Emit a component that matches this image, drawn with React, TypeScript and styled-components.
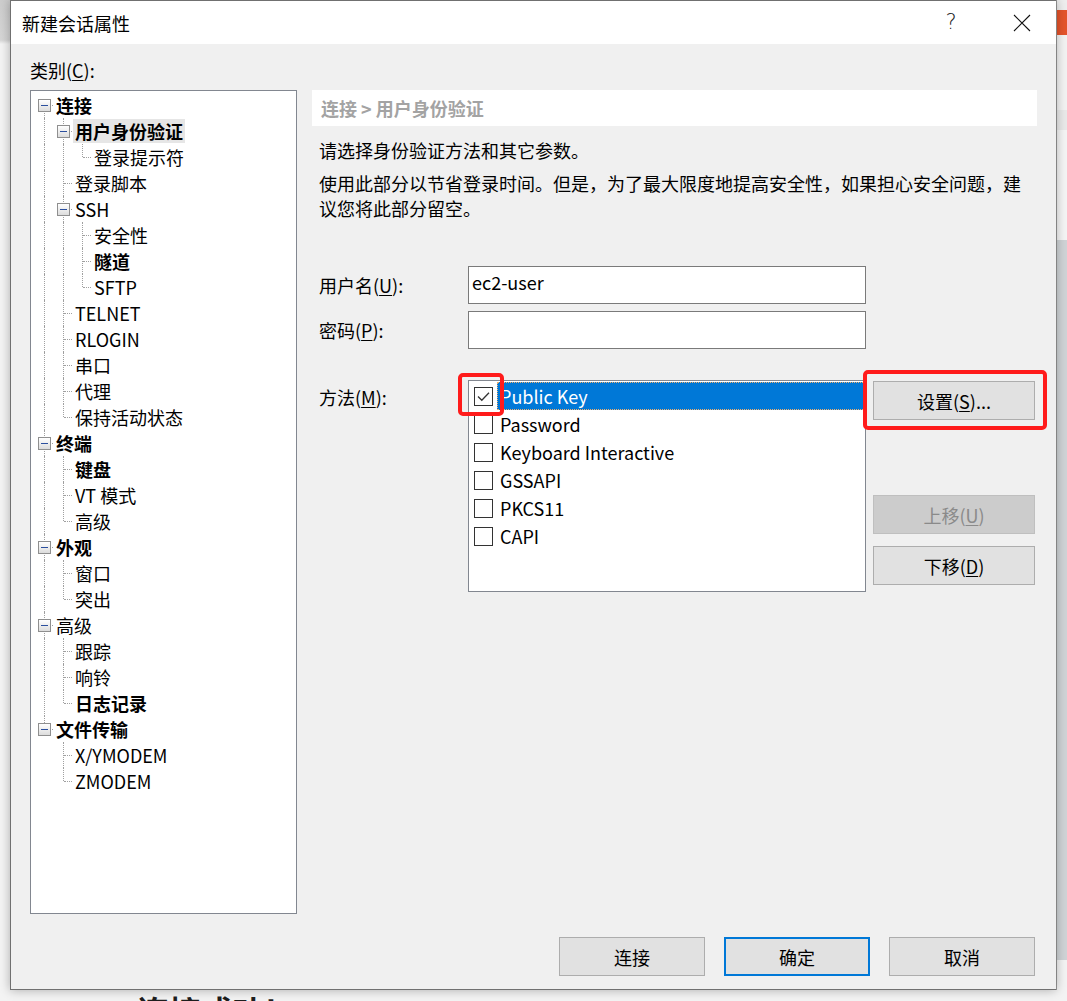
import React from "react";
import styled, { createGlobalStyle } from "styled-components";

type TreeNode = {
    label: string;
    bold?: boolean;
    selected?: boolean;
    children?: TreeNode[];
};

type TreeLine = {
    node: TreeNode;
    lastFlags: boolean[];
    firstRoot: boolean;
};

const categories: TreeNode[] = [
    {
        label: "连接",
        bold: true,
        children: [
            { label: "用户身份验证", bold: true, selected: true, children: [{ label: "登录提示符" }] },
            { label: "登录脚本" },
            {
                label: "SSH",
                children: [{ label: "安全性" }, { label: "隧道", bold: true }, { label: "SFTP" }],
            },
            { label: "TELNET" },
            { label: "RLOGIN" },
            { label: "串口" },
            { label: "代理" },
            { label: "保持活动状态" },
        ],
    },
    {
        label: "终端",
        bold: true,
        children: [{ label: "键盘", bold: true }, { label: "VT 模式" }, { label: "高级" }],
    },
    { label: "外观", bold: true, children: [{ label: "窗口" }, { label: "突出" }] },
    {
        label: "高级",
        children: [{ label: "跟踪" }, { label: "响铃" }, { label: "日志记录", bold: true }],
    },
    { label: "文件传输", bold: true, children: [{ label: "X/YMODEM" }, { label: "ZMODEM" }] },
];

const methods = ["Public Key", "Password", "Keyboard Interactive", "GSSAPI", "PKCS11", "CAPI"];

// flatten the tree, remembering which ancestors are last among their siblings
const flatten = (nodes: TreeNode[], parentFlags: boolean[], out: TreeLine[]) => {
    nodes.forEach((node, i) => {
        const flags = [...parentFlags, i === nodes.length - 1];
        out.push({ node, lastFlags: flags, firstRoot: parentFlags.length === 0 && i === 0 });
        if (node.children) flatten(node.children, flags, out);
    });
    return out;
};

const Mnemonic: React.FC<{ text: string; k: string; tail?: string }> = ({ text, k, tail = ":" }) => (
    <>
        {text}(<u>{k}</u>){tail}
    </>
);

const App: React.FC = () => {
    const lines = flatten(categories, [], []);

    return (
        <Screen>
            <GlobalStyle />
            <Stage>
                <Gutter />
                <Dialog>
                    <TitleBar>
                        <Title>新建会话属性</Title>
                        <TitleButtons>
                            <HelpGlyph>?</HelpGlyph>
                            <CloseIcon width="18" height="18" viewBox="0 0 18 18">
                                <path d="M1 1 L17 17 M17 1 L1 17" stroke="#111" strokeWidth="1.1" fill="none" />
                            </CloseIcon>
                        </TitleButtons>
                    </TitleBar>

                    <Body>
                        <Columns>
                            <CategoryLabel>
                                <Mnemonic text="类别" k="C" />
                            </CategoryLabel>

                            <TreeBox>
                                {lines.map((line, idx) => {
                                    const isLast = line.lastFlags[line.lastFlags.length - 1];
                                    return (
                                        <TreeRow key={idx}>
                                            {line.lastFlags.slice(0, -1).map((last, i) => (
                                                <Guide key={i} $line={!last} />
                                            ))}
                                            <Connector $top={!line.firstRoot} $bottom={!isLast}>
                                                {line.node.children && (
                                                    <Expander>
                                                        <Minus />
                                                    </Expander>
                                                )}
                                            </Connector>
                                            <NodeLabel $bold={line.node.bold} $selected={line.node.selected}>
                                                {line.node.label}
                                            </NodeLabel>
                                        </TreeRow>
                                    );
                                })}
                            </TreeBox>

                            <Panel>
                                <Crumb>连接 &gt; 用户身份验证</Crumb>
                                <Intro>请选择身份验证方法和其它参数。</Intro>
                                <Hint>
                                    使用此部分以节省登录时间。但是，为了最大限度地提高安全性，如果担心安全问题，建议您将此部分留空。
                                </Hint>

                                <FieldRow $first>
                                    <FieldLabel>
                                        <Mnemonic text="用户名" k="U" />
                                    </FieldLabel>
                                    <TextBox>ec2-user</TextBox>
                                </FieldRow>
                                <FieldRow>
                                    <FieldLabel>
                                        <Mnemonic text="密码" k="P" />
                                    </FieldLabel>
                                    <TextBox />
                                </FieldRow>

                                <MethodRow>
                                    <MethodLabel>
                                        <Mnemonic text="方法" k="M" />
                                    </MethodLabel>
                                    <MethodList>
                                        {methods.map((m, i) => (
                                            <MethodItem key={m}>
                                                <CheckBox>
                                                    {i === 0 && (
                                                        <svg width="17" height="17" viewBox="0 0 17 17">
                                                            <path
                                                                d="M3 8.5 L6.8 12.3 L14 4.8"
                                                                stroke="#333"
                                                                strokeWidth="1.3"
                                                                fill="none"
                                                            />
                                                        </svg>
                                                    )}
                                                </CheckBox>
                                                <MethodName $active={i === 0}>{m}</MethodName>
                                            </MethodItem>
                                        ))}
                                        <Callout $left={-11} $top={-8} $w={46} $h={43} />
                                    </MethodList>
                                    <SideButtons>
                                        <Button>
                                            <Mnemonic text="设置" k="S" tail="..." />
                                        </Button>
                                        <Button $disabled $gap={75}>
                                            <Mnemonic text="上移" k="U" tail="" />
                                        </Button>
                                        <Button $gap={12}>
                                            <Mnemonic text="下移" k="D" tail="" />
                                        </Button>
                                        <Callout $left={-10} $top={-11} $w={184} $h={60} />
                                    </SideButtons>
                                </MethodRow>
                            </Panel>
                        </Columns>

                        <Footer>
                            <Button $wide>连接</Button>
                            <Button $wide $primary>
                                确定
                            </Button>
                            <Button $wide>取消</Button>
                        </Footer>
                    </Body>
                </Dialog>
                <SideStrip>
                    <StripBlock $h={10} $c="#eeeeee" />
                    <StripBlock $h={25} $c="#e4532b" />
                    <StripBlock $h={75} $c="#f2f2f2" />
                    <StripBlock $h={20} $c="#e9e9e9" />
                    <StripBlock $h={110} $c="#f4f4f4" />
                    <StripBlock $h={720} $c="#cfd3d6" />
                </SideStrip>
            </Stage>
            <Behind>连接成功!</Behind>
        </Screen>
    );
};

// Styled Components

const GlobalStyle = createGlobalStyle`
    html, body {
        margin: 0;
        padding: 0;
        background: #f3f3f3;
    }
    body {
        font-family: "Noto Sans CJK SC", "Noto Sans", sans-serif;
        color: #000;
    }
    u {
        text-decoration: underline;
        text-underline-offset: 2px;
        text-decoration-thickness: 1px;
    }
`;

const Screen = styled.div`
    width: 1067px;
    height: 1001px;
    overflow: hidden;
    background: #f3f3f3;
`;

const Stage = styled.div`
    display: flex;
    height: 990px;
`;

const Gutter = styled.div`
    width: 10px;
    background: linear-gradient(#cdcdcd 0, #d6d6d6 40px, #f4f4f4 44px);
`;

const SideStrip = styled.div`
    width: 10px;
    display: flex;
    flex-direction: column;
    border-left: 1px solid #9a9a9a;
`;

const StripBlock = styled.div<{ $h: number; $c: string }>`
    height: ${(p) => p.$h}px;
    flex-shrink: 0;
    background: ${(p) => p.$c};
`;

const Dialog = styled.div`
    width: 1046px;
    display: flex;
    flex-direction: column;
    border: 1px solid #707070;
    border-right: none;
    background: #f0f0f0;
    box-shadow: 0 0 10px rgba(0, 0, 0, 0.3);
    position: relative;
    z-index: 1;
`;

const TitleBar = styled.div`
    height: 43px;
    background: #fff;
    display: flex;
    align-items: center;
    justify-content: space-between;
    padding-left: 11px;
`;

const Title = styled.div`
    font-size: 18px;
    line-height: 24px;
`;

const TitleButtons = styled.div`
    display: flex;
    align-items: center;
    height: 100%;
`;

const HelpGlyph = styled.div`
    font-family: "DejaVu Sans", sans-serif;
    font-size: 21px;
    font-weight: 300;
    color: #222;
    width: 20px;
    text-align: center;
    margin-right: 52px;
    margin-top: -2px;
`;

const CloseIcon = styled.svg`
    margin-right: 25px;
`;

const Body = styled.div`
    flex: 1;
    display: flex;
    flex-direction: column;
    padding: 14px 19px 13px 19px;
`;

const Columns = styled.div`
    display: grid;
    grid-template-columns: 267px 725px;
    grid-template-rows: 24px 824px;
    column-gap: 15px;
    row-gap: 8px;
`;

const CategoryLabel = styled.div`
    grid-column: 1;
    grid-row: 1;
    font-size: 18px;
    line-height: 24px;
`;

const TreeBox = styled.div`
    grid-column: 1;
    grid-row: 2;
    box-sizing: border-box;
    background: #fff;
    border: 1px solid #828790;
    padding: 1px 0 0 4px;
`;

const TreeRow = styled.div`
    display: flex;
    align-items: center;
    height: 26px;
`;

const Guide = styled.div<{ $line: boolean }>`
    width: 19px;
    height: 26px;
    flex-shrink: 0;
    position: relative;

    &::before {
        content: "";
        display: ${(p) => (p.$line ? "block" : "none")};
        position: absolute;
        left: 9px;
        top: 0;
        bottom: 0;
        border-left: 1px dotted #a0a0a0;
    }
`;

const Connector = styled.div<{ $top: boolean; $bottom: boolean }>`
    width: 19px;
    height: 26px;
    flex-shrink: 0;
    position: relative;

    &::before {
        content: "";
        position: absolute;
        left: 9px;
        top: ${(p) => (p.$top ? "0" : "13px")};
        bottom: ${(p) => (p.$bottom ? "0" : "13px")};
        border-left: 1px dotted #a0a0a0;
    }

    &::after {
        content: "";
        position: absolute;
        left: 10px;
        top: 13px;
        width: 8px;
        border-top: 1px dotted #a0a0a0;
    }
`;

const Expander = styled.div`
    position: absolute;
    left: 3px;
    top: 7px;
    width: 13px;
    height: 13px;
    box-sizing: border-box;
    border: 1px solid #8f8f8f;
    background: linear-gradient(#ffffff, #dcdcdc);
    z-index: 1;
    display: flex;
    align-items: center;
    justify-content: center;
`;

const Minus = styled.div`
    width: 7px;
    height: 1px;
    background: #2b4f9e;
`;

const NodeLabel = styled.div<{ $bold?: boolean; $selected?: boolean }>`
    font-size: 18px;
    line-height: 24px;
    padding: 0 2px;
    white-space: nowrap;
    font-weight: ${(p) => (p.$bold ? 700 : 400)};
    background: ${(p) => (p.$selected ? "#e6e6e6" : "transparent")};
`;

const Panel = styled.div`
    grid-column: 2;
    grid-row: 2;
    display: flex;
    flex-direction: column;
`;

const Crumb = styled.div`
    height: 36px;
    background: #fff;
    display: flex;
    align-items: center;
    padding-left: 9px;
    font-size: 18px;
    font-weight: 700;
    color: #a3a3a3;
`;

const Intro = styled.div`
    margin: 12px 0 0 7px;
    font-size: 18px;
    line-height: 25px;
`;

const Hint = styled.div`
    margin: 8px 0 0 7px;
    width: 712px;
    font-size: 18px;
    line-height: 25px;
`;

const FieldRow = styled.div<{ $first?: boolean }>`
    display: flex;
    align-items: center;
    margin-top: ${(p) => (p.$first ? 45 : 7)}px;
    padding-left: 7px;
`;

const FieldLabel = styled.div`
    width: 149px;
    font-size: 18px;
    line-height: 24px;
`;

const TextBox = styled.div`
    box-sizing: border-box;
    width: 398px;
    height: 38px;
    border: 1px solid #7a7a7a;
    background: #fff;
    padding-left: 3px;
    font-size: 18px;
    line-height: 30px;
`;

const MethodRow = styled.div`
    display: flex;
    align-items: flex-start;
    margin-top: 31px;
    padding-left: 7px;
`;

const MethodLabel = styled.div`
    width: 149px;
    font-size: 18px;
    line-height: 34px;
`;

const MethodList = styled.div`
    position: relative;
    box-sizing: border-box;
    width: 398px;
    height: 212px;
    border: 1px solid #828790;
    background: #fff;
    padding: 1px 0 0 5px;
`;

const MethodItem = styled.div`
    display: flex;
    align-items: center;
    height: 28px;
`;

const CheckBox = styled.div`
    box-sizing: border-box;
    width: 19px;
    height: 19px;
    border: 1px solid #333;
    background: #fff;
    display: flex;
    align-items: center;
    justify-content: center;
    flex-shrink: 0;
`;

const MethodName = styled.div<{ $active?: boolean }>`
    flex: 1;
    align-self: stretch;
    display: flex;
    align-items: center;
    margin-left: 4px;
    padding-left: 3px;
    font-size: 18px;
    color: ${(p) => (p.$active ? "#fff" : "#000")};
    background: ${(p) => (p.$active ? "#0078d7" : "transparent")};
    outline: ${(p) => (p.$active ? "1px dotted #f0b070" : "none")};
    outline-offset: -1px;
`;

const Callout = styled.div<{ $left: number; $top: number; $w: number; $h: number }>`
    position: absolute;
    left: ${(p) => p.$left}px;
    top: ${(p) => p.$top}px;
    width: ${(p) => p.$w}px;
    height: ${(p) => p.$h}px;
    box-sizing: border-box;
    border: 4px solid #ff1b1b;
    border-radius: 5px;
    pointer-events: none;
    z-index: 2;
`;

const SideButtons = styled.div`
    position: relative;
    display: flex;
    flex-direction: column;
    width: 162px;
    margin: 1px 0 0 7px;
`;

const Button = styled.div<{ $disabled?: boolean; $primary?: boolean; $wide?: boolean; $gap?: number }>`
    box-sizing: border-box;
    width: ${(p) => (p.$wide ? 146 : 162)}px;
    height: 39px;
    margin-top: ${(p) => p.$gap ?? 0}px;
    display: flex;
    align-items: center;
    justify-content: center;
    font-size: 18px;
    background: ${(p) => (p.$disabled ? "#cccccc" : "#e1e1e1")};
    color: ${(p) => (p.$disabled ? "#8a8a8a" : "#000")};
    border: ${(p) =>
        p.$primary ? "2px solid #0078d7" : p.$disabled ? "1px solid #bfbfbf" : "1px solid #adadad"};
`;

const Footer = styled.div`
    display: flex;
    justify-content: flex-end;
    gap: 19px;
    margin-top: 23px;
    padding-right: 2px;
`;

const Behind = styled.div`
    height: 11px;
    overflow: hidden;
    padding-left: 137px;
    font-size: 32px;
    font-weight: 700;
    line-height: 40px;
    color: #1e1e1e;
`;

export default App;
